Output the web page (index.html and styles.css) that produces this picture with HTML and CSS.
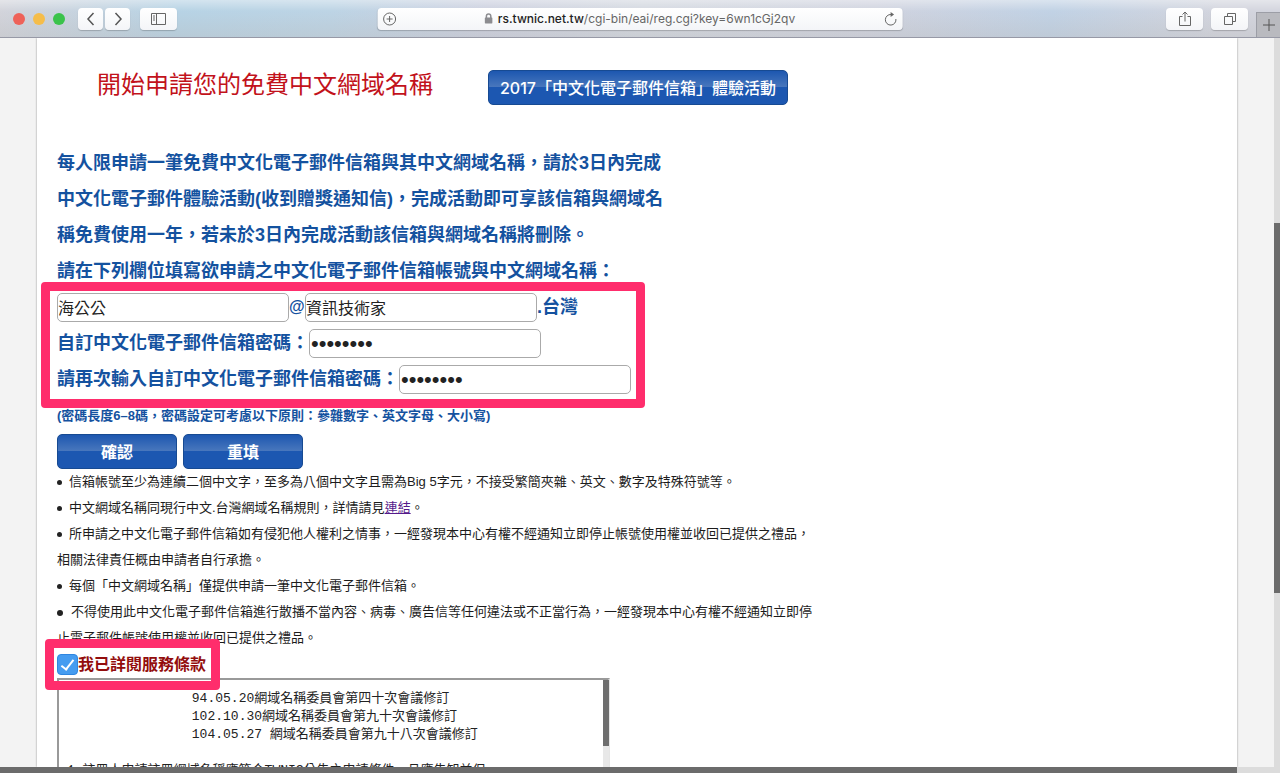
FILE: index.html
```html
<!DOCTYPE html>
<html lang="zh-Hant-TW">
<head>
  <meta charset="UTF-8">
  <title>中文化電子郵件信箱申請</title>
  <meta name="viewport" content="width=device-width, initial-scale=1.0">
  <link rel="stylesheet" href="styles.css">
</head>
<body>
  <header class="toolbar">
    <div class="lights">
      <span class="light red"></span>
      <span class="light yellow"></span>
      <span class="light green"></span>
    </div>
    <div class="nav-btns">
      <button class="tool-btn small" type="button" aria-label="上一頁">
        <svg width="16" height="16" viewBox="0 0 16 16"><path d="M10.500 2 5 8l5.500 6"/></svg>
      </button>
      <button class="tool-btn small" type="button" aria-label="下一頁">
        <svg width="16" height="16" viewBox="0 0 16 16"><path d="M5.500 2 11 8l-5.500 6"/></svg>
      </button>
    </div>
    <button class="tool-btn" type="button" aria-label="側邊欄">
      <svg width="16" height="14" viewBox="0 0 16 14" class="thin"><path d="M.5 1.500h14v11H.5zM5.500 1.500v11M2 4h2M2 6h2M2 8h2"/></svg>
    </button>
    <div class="address">
      <svg width="14" height="14" viewBox="0 0 14 14" class="thin"><circle cx="7" cy="7" r="6"/><path d="M7 4v6M4 7h6"/></svg>
      <div class="url">
        <svg width="8" height="11" viewBox="0 0 8 11"><rect x="0" y="4.500" width="8" height="6" rx="1" fill="#8c8c90" stroke="none"/><path d="M1.800 5V3.200a2.200 2.200 0 0 1 4.400 0V5" stroke="#8c8c90"/></svg>
        <span><b>rs.twnic.net.tw</b>/cgi-bin/eai/reg.cgi?key=6wn1cGj2qv</span>
      </div>
      <svg width="14" height="14" viewBox="0 0 14 14" class="thin"><path d="M7.500 2.500A5.300 5.300 0 1 0 12.300 7"/><path d="M7 0v5l3.500-2.500z" fill="#666" stroke="none"/></svg>
    </div>
    <div class="right-btns">
      <button class="tool-btn" type="button" aria-label="分享">
        <svg width="14" height="16" viewBox="0 0 14 16" class="thin"><path d="M4.500 5.500h-3v9h11v-9h-3M7 10.500V1M4.500 3.500 7 1l2.500 2.500"/></svg>
      </button>
      <button class="tool-btn" type="button" aria-label="分頁">
        <svg width="14" height="14" viewBox="0 0 14 14" class="thin"><path d="M1.500 4.500h8v8h-8zM4.500 4.500v-3h8v8h-3"/></svg>
      </button>
    </div>
    <button class="new-tab" type="button" aria-label="新分頁">
      <svg width="12" height="12" viewBox="0 0 12 12"><path d="M6 0v12M0 6h12"/></svg>
    </button>
  </header>

  <div class="window">
    <main class="page">
      <div class="title-row">
        <h1>開始申請您的免費中文網域名稱</h1>
        <button class="btn event" type="button">2017「中文化電子郵件信箱」體驗活動</button>
      </div>

      <form>
        <p class="notice">每人限申請一筆免費中文化電子郵件信箱與其中文網域名稱，請於3日內完成中文化電子郵件體驗活動(收到贈獎通知信)，完成活動即可享該信箱與網域名稱免費使用一年，若未於3日內完成活動該信箱與網域名稱將刪除。</p>
        <p class="notice">請在下列欄位填寫欲申請之中文化電子郵件信箱帳號與中文網域名稱：</p>

        <div class="fields">
          <div class="field-row">
            <input type="text" id="account" class="field" value="海公公" aria-label="信箱帳號">
            <label for="domain" class="at">@</label>
            <input type="text" id="domain" class="field" value="資訊技術家">
            <span>.台灣</span>
          </div>
          <div class="field-row">
            <label for="pw1">自訂中文化電子郵件信箱密碼：</label>
            <input type="password" id="pw1" class="field" value="abcd1234">
          </div>
          <div class="field-row">
            <label for="pw2">請再次輸入自訂中文化電子郵件信箱密碼：</label>
            <input type="password" id="pw2" class="field" value="abcd1234">
          </div>
        </div>
        <p class="hint">(密碼長度6–8碼，密碼設定可考慮以下原則：參雜數字、英文字母、大小寫)</p>

        <div class="actions">
          <button class="btn" type="button">確認</button>
          <button class="btn" type="reset">重填</button>
        </div>

        <ul class="rules">
          <li>信箱帳號至少為連續二個中文字，至多為八個中文字且需為Big 5字元，不接受繁簡夾雜、英文、數字及特殊符號等。</li>
          <li>中文網域名稱同現行中文.台灣網域名稱規則，詳情請見<a href="#">連結</a>。</li>
          <li>所申請之中文化電子郵件信箱如有侵犯他人權利之情事，一經發現本中心有權不經通知立即停止帳號使用權並收回已提供之禮品，相關法律責任概由申請者自行承擔。</li>
          <li>每個「中文網域名稱」僅提供申請一筆中文化電子郵件信箱。</li>
          <li class="wide">不得使用此中文化電子郵件信箱進行散播不當內容、病毒、廣告信等任何違法或不正當行為，一經發現本中心有權不經通知立即停止電子郵件帳號使用權並收回已提供之禮品。</li>
        </ul>

        <div class="agree">
          <input type="checkbox" id="agree" checked>
          <label for="agree">我已詳閱服務條款</label>
        </div>

        <div class="terms-box">
          <textarea class="terms" readonly aria-label="服務條款">
                94.05.20網域名稱委員會第四十次會議修訂
                102.10.30網域名稱委員會第九十次會議修訂
                104.05.27 網域名稱委員會第九十八次會議修訂

1.註冊人申請註冊網域名稱應符合TWNIC公告之申請條件，且應告知並保
</textarea>
          <div class="terms-scroll"></div>
        </div>
      </form>
    </main>
    <div class="scroll-y"><div class="thumb"></div></div>
  </div>
  <div class="scroll-x"><div class="thumb"></div></div>
</body>
</html>
```
FILE: styles.css
```css
*, *::before, *::after { box-sizing: border-box; }
body {
  margin: 0; height: 100vh; display: flex; flex-direction: column; overflow: hidden;
  background: #f3f3f3; color: #1c1c1c;
  font-family: "Liberation Sans", "Noto Sans CJK TC", sans-serif;
}
button { font-family: inherit; }

/* browser toolbar */
.toolbar {
  flex: none; height: 38px; display: flex; align-items: center; padding-left: 13px; position: relative;
  border-bottom: 1px solid #9799a6;
  background:
    linear-gradient(#fff6, #fff0 30%, #b8b8b84d),
    linear-gradient(100deg, #d3d4db 0%, #b7d3e5 14%, #bdd4e5 26%, #ccd0df 38%, #d3d8e0 50%, #d0d3df 68%, #c1d2e5 82%, #d3d5de 95%);
}
.toolbar svg { display: block; fill: none; stroke: #555; stroke-width: 1.5; }
.toolbar .thin { stroke: #666; stroke-width: 1; }
.lights { display: flex; gap: 8px; }
.light { width: 12px; height: 12px; border-radius: 50%; }
.red { background: #ee6259; }
.yellow { background: #f5bd4a; }
.green { background: #3ac34b; }
.nav-btns { display: flex; gap: 2px; margin: 0 10px 0 13px; }
.tool-btn {
  width: 37px; height: 22px; padding: 0; border: none; border-radius: 4px;
  display: flex; align-items: center; justify-content: center;
  background: linear-gradient(#fff, #f4f5f8); box-shadow: 0 1px 1px #0003;
}
.tool-btn.small { width: 25px; }
.address {
  position: absolute; left: 50%; transform: translateX(-50%);
  width: 41%; height: 22px; padding: 0 5px; border-radius: 4px;
  display: flex; align-items: center; justify-content: space-between;
  background: linear-gradient(#fff, #f4f5f8); box-shadow: 0 1px 1px #0003;
}
.url { display: flex; align-items: center; gap: 5px; font: 12px Inter, sans-serif; color: #666; }
.url b { font-weight: 500; color: #222; }
.right-btns { display: flex; gap: 8px; margin-left: auto; }
.new-tab {
  align-self: flex-end; width: 24px; height: 25px; margin-left: 8px; padding: 0;
  display: flex; align-items: center; justify-content: center;
  border: 1px solid #9c9ea6; border-width: 1px 0 0 1px; background: #b9babf;
}
.new-tab svg { stroke-width: 1; }

/* page */
.window { flex: 1; min-height: 0; display: flex; overflow: hidden; }
.page {
  flex: 1; margin: 0 37px; padding: 32px 20px 0; min-width: 0;
  background: #fff; box-shadow: 0 0 2px #0006;
}
.title-row { display: flex; align-items: flex-start; gap: 55px; padding-left: 40px; margin-bottom: 40px; }
h1 { margin: 0; font-size: 24px; line-height: 30px; font-weight: 400; color: #c2121b; }
.btn {
  height: 35px; padding: 0 0 2px; border: 1px solid #174a92; border-radius: 5px;
  font-size: 16px; font-weight: 700; font-family: Inter, "Noto Sans CJK TC", sans-serif; color: #fff;
  background: linear-gradient(#1d57b0, #4a78bd 50%, #1c57b1 50%);
}
.event { width: 300px; font-weight: 500; }
.notice, .hint { margin: 0; color: #14529f; font-weight: 700; }
.notice { max-width: 612px; font-size: 18px; line-height: 36px; }
.fields { position: relative; width: 604px; color: #14529f; font-size: 18px; font-weight: 700; }
.fields::after {
  content: ""; position: absolute; left: -16px; top: -7px; width: 100%; height: 126px;
  border: 9px solid #ff2d6c; border-radius: 4px; pointer-events: none;
}
.field-row { display: flex; align-items: center; height: 36px; }
.field-row label, .field-row span { flex: none; line-height: 36px; }
.field-row .at { width: 16px; font-size: 16px; }
.field {
  width: 232px; height: 29px; padding: 0; border: 1px solid #aaa; border-radius: 5px;
  background: #fff; color: #222; font-size: 16px; font-family: inherit; outline: none;
}
.field[type="password"] { padding: 2px 0 0 1px; font-size: 22px; }
.hint { font-size: 13px; line-height: 37px; }
.actions { display: flex; gap: 6px; }
.actions .btn { width: 120px; }

.rules { margin: 0; padding: 0; list-style: none; max-width: 758px; font-size: 13px; line-height: 26px; }
.rules li::before {
  content: ""; display: inline-block; width: 5px; height: 5px; margin-right: 7px;
  border-radius: 50%; background: #222; vertical-align: middle;
}
.rules .wide::before { width: 6px; height: 6px; margin-right: 8px; }
.rules a { color: #551a8b; }

.agree {
  position: relative; z-index: 1; display: flex; align-items: center; height: 27px; width: 175px;
  font-size: 16px; font-weight: 700; color: #930d0d;
}
.agree::before {
  content: ""; position: absolute; left: -12px; top: -12px; width: 100%; height: 51px;
  border: 9px solid #ff2d6c; border-radius: 4px; pointer-events: none;
  background: linear-gradient(#fff 30px, transparent 30px) no-repeat;
}
.agree label { position: relative; line-height: 27px; }
.agree input {
  appearance: none; position: relative; width: 21px; height: 21px; margin: 0;
  border: 1px solid #2f86e0; border-radius: 4px; background: #459cf0;
}
.agree input:checked::after {
  content: ""; position: absolute; left: 6px; top: 2px; width: 7px; height: 13px;
  border: solid #fff; border-width: 0 2px 2px 0; transform: rotate(38deg);
}

.terms-box { position: relative; width: 553px; }
.terms {
  display: block; width: 100%; height: 240px; padding: 10px 8px; resize: none; overflow: hidden;
  border: 2px solid #999; border-right-color: #e5e5e5; background: #fff; color: #222; outline: none;
  font: 13px/18px "Liberation Mono", "Noto Sans CJK TC", monospace; white-space: pre;
}
.terms-scroll {
  position: absolute; right: 1px; top: 2px; width: 6px; height: 236px;
  background: linear-gradient(#6e6e6e 66px, #e8e8e8 66px);
}

/* window scrollbars */
.scroll-y { flex: none; width: 6px; padding-top: 185px; background: #dcdcdc; }
.scroll-y .thumb { height: 68%; background: #6b6b6b; }
.scroll-x { flex: none; height: 6px; background: #dcdcdc; }
.scroll-x .thumb { width: calc(100% - 43px); height: 6px; background: #6b6b6b; }
```
